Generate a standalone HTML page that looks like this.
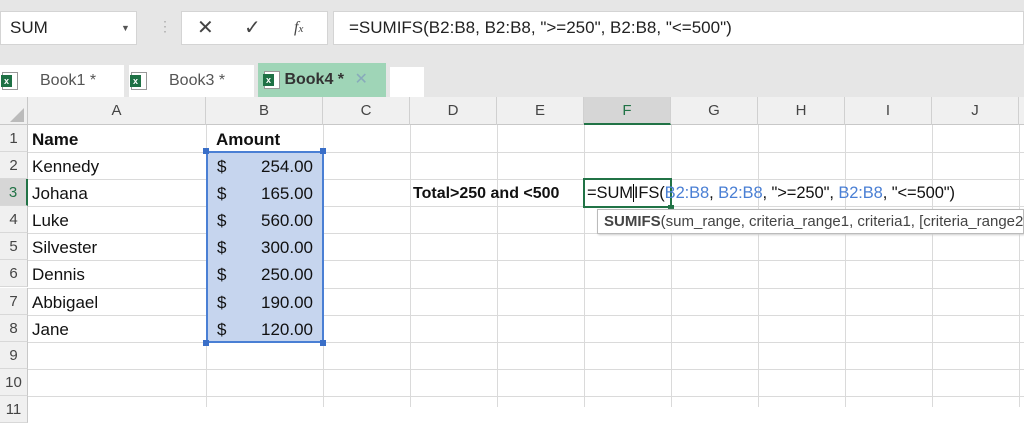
<!DOCTYPE html>
<html><head><style>
*{margin:0;padding:0;box-sizing:border-box}
body{width:1024px;height:407px;overflow:hidden;background:#fff;font-family:"Liberation Sans",sans-serif;position:relative}
.a{position:absolute}
.top{left:0;top:0;width:1024px;height:97px;background:#e6e6e6}
.box{background:#fff;border:1px solid #d4d4d4}
.hdr{top:97px;height:28px;background:#f0f0f0;border-bottom:1px solid #c8c8c8;width:1024px;left:0}
.ch{top:97px;height:28px;font-size:15px;color:#444;text-align:center;line-height:28px;border-right:1px solid #d0d0d0}
.rh{left:0;width:28px;background:#f0f0f0;border-right:1px solid #c8c8c8;border-bottom:1px solid #d8d8d8;font-size:15px;color:#444;text-align:center;height:27.2px;line-height:27px}
.vl{top:125px;width:1px;height:282px;background:#dadada}
.hl{left:28px;width:996px;height:1px;background:#dadada}
.t{font-size:17px;color:#111;line-height:27px;height:27px;white-space:nowrap}
.tab{top:65px;height:32px;background:#fff;font-size:16px;color:#555;line-height:32px}
.ic{display:inline-block;width:16px;height:18px;background:#fff;border:1px solid #999;vertical-align:middle;position:relative}
.ic:before{content:"x";position:absolute;left:-2px;top:2px;width:11px;height:12px;background:#1e7145;color:#fff;font-size:9px;line-height:12px;text-align:center;font-weight:bold}
</style></head><body>
<div class="a top"></div>
<div class="a box" style="left:0;top:11px;width:137px;height:34px;font-size:17px;line-height:32px;padding-left:9px;color:#222">SUM<span class="a" style="left:120px;top:0;font-size:9px;color:#555">▼</span></div>
<div class="a" style="left:158px;top:18px;color:#aaa;font-size:14px">⋮</div>
<div class="a box" style="left:181px;top:11px;width:147px;height:34px;font-size:20px;line-height:32px;color:#444"><span class="a" style="left:15px">✕</span><span class="a" style="left:62px">✓</span><span class="a" style="left:112px;font-family:'Liberation Serif',serif;font-style:italic;font-size:16px">f<span style="font-size:11px">x</span></span></div>
<div class="a box" style="left:333px;top:11px;width:691px;height:34px;font-size:17px;line-height:32px;padding-left:15px;color:#222">=SUMIFS(B2:B8, B2:B8, "&gt;=250", B2:B8, "&lt;=500")</div>
<div class="a tab" style="left:0;width:124px"><span class="ic" style="margin-left:2px"></span><span style="margin-left:22px">Book1 *</span></div>
<div class="a tab" style="left:129px;width:125px"><span class="ic" style="margin-left:2px"></span><span style="margin-left:22px">Book3 *</span></div>
<div class="a tab" style="left:258px;top:63px;height:34px;width:128px;background:#9fd5b7;color:#333;font-weight:bold;line-height:34px;font-size:16px"><span class="ic" style="margin-left:6px"></span> Book4 * <span style="color:#8ab;font-weight:normal;margin-left:6px">✕</span></div>
<div class="a tab" style="left:390px;top:67px;height:30px;width:34px"></div>
<div class="a hdr"></div>
<div class="a" style="left:0;top:97px;width:28px;height:28px;border-right:1px solid #c8c8c8"><div class="a" style="right:3px;bottom:3px;width:0;height:0;border-left:14px solid transparent;border-bottom:14px solid #bbb"></div></div>
<div class="a ch" style="left:28px;width:178px">A</div>
<div class="a ch" style="left:206px;width:117px">B</div>
<div class="a ch" style="left:323px;width:87px">C</div>
<div class="a ch" style="left:410px;width:87px">D</div>
<div class="a ch" style="left:497px;width:87px">E</div>
<div class="a ch" style="left:584px;width:87px;background:#d6d6d6;border-bottom:2px solid #217346;color:#217346">F</div>
<div class="a ch" style="left:671px;width:87px">G</div>
<div class="a ch" style="left:758px;width:87px">H</div>
<div class="a ch" style="left:845px;width:87px">I</div>
<div class="a ch" style="left:932px;width:87px">J</div>
<div class="a vl" style="left:206px"></div><div class="a vl" style="left:323px"></div><div class="a vl" style="left:410px"></div><div class="a vl" style="left:497px"></div><div class="a vl" style="left:584px"></div><div class="a vl" style="left:671px"></div><div class="a vl" style="left:758px"></div><div class="a vl" style="left:845px"></div><div class="a vl" style="left:932px"></div><div class="a vl" style="left:1019px"></div>
<div class="a hl" style="top:152px"></div><div class="a hl" style="top:179px"></div><div class="a hl" style="top:206px"></div><div class="a hl" style="top:233px"></div><div class="a hl" style="top:260px"></div><div class="a hl" style="top:288px"></div><div class="a hl" style="top:315px"></div><div class="a hl" style="top:342px"></div><div class="a hl" style="top:369px"></div><div class="a hl" style="top:396px"></div>
<div class="a rh" style="top:125px">1</div><div class="a rh" style="top:152px">2</div><div class="a rh" style="top:179px;background:#d6d6d6;border-right:2px solid #217346;color:#217346">3</div><div class="a rh" style="top:206px">4</div><div class="a rh" style="top:233px">5</div><div class="a rh" style="top:260px">6</div><div class="a rh" style="top:288px">7</div><div class="a rh" style="top:315px">8</div><div class="a rh" style="top:342px">9</div><div class="a rh" style="top:369px">10</div><div class="a rh" style="top:396px">11</div>
<div class="a" style="left:206px;top:151px;width:118px;height:192px;background:#c6d5ee;border:2px solid #4a7fd4"></div>
<div class="a" style="left:203px;top:148px;width:6px;height:6px;background:#3a6fc8"></div><div class="a" style="left:320px;top:148px;width:6px;height:6px;background:#3a6fc8"></div><div class="a" style="left:203px;top:340px;width:6px;height:6px;background:#3a6fc8"></div><div class="a" style="left:320px;top:340px;width:6px;height:6px;background:#3a6fc8"></div>
<div class="a t" style="left:32px;top:126px;font-weight:bold">Name</div>
<div class="a t" style="left:216px;top:126px;font-weight:bold">Amount</div>
<div class="a t" style="left:32px;top:153px">Kennedy</div><div class="a t" style="left:32px;top:180px">Johana</div><div class="a t" style="left:32px;top:207px">Luke</div><div class="a t" style="left:32px;top:234px">Silvester</div><div class="a t" style="left:32px;top:261px">Dennis</div><div class="a t" style="left:32px;top:289px">Abbigael</div><div class="a t" style="left:32px;top:316px">Jane</div>
<div class="a t" style="left:217px;top:153px">$</div><div class="a t" style="left:217px;top:180px">$</div><div class="a t" style="left:217px;top:207px">$</div><div class="a t" style="left:217px;top:234px">$</div><div class="a t" style="left:217px;top:261px">$</div><div class="a t" style="left:217px;top:289px">$</div><div class="a t" style="left:217px;top:316px">$</div>
<div class="a t" style="left:240px;width:73px;text-align:right;top:153px">254.00</div><div class="a t" style="left:240px;width:73px;text-align:right;top:180px">165.00</div><div class="a t" style="left:240px;width:73px;text-align:right;top:207px">560.00</div><div class="a t" style="left:240px;width:73px;text-align:right;top:234px">300.00</div><div class="a t" style="left:240px;width:73px;text-align:right;top:261px">250.00</div><div class="a t" style="left:240px;width:73px;text-align:right;top:289px">190.00</div><div class="a t" style="left:240px;width:73px;text-align:right;top:316px">120.00</div>
<div class="a t" style="left:413px;top:180px;font-weight:bold;font-size:16px">Total&gt;250 and &lt;500</div>
<div class="a" style="left:583px;top:178px;width:89px;height:30px;border:2px solid #217346;background:#fff"></div>
<div class="a" style="left:668px;top:205px;width:6px;height:6px;background:#217346"></div>
<div class="a t" style="left:587px;top:180px;background:transparent;font-size:16.5px;letter-spacing:-0.1px">=SUM<span style="border-left:1px solid #000"></span>IFS(<span style="color:#4a7fd4">B2:B8</span>, <span style="color:#4a7fd4">B2:B8</span>, "&gt;=250", <span style="color:#4a7fd4">B2:B8</span>, "&lt;=500")</div>
<div class="a" style="left:597px;top:209px;width:427px;height:25px;background:#fff;border:1px solid #bbb;box-shadow:1px 1px 2px #ccc;font-size:15px;line-height:23px;padding-left:6px;color:#444;white-space:nowrap;overflow:hidden"><b>SUMIFS</b>(sum_range, criteria_range1, criteria1, [criteria_range2, ...</div>
</body></html>
